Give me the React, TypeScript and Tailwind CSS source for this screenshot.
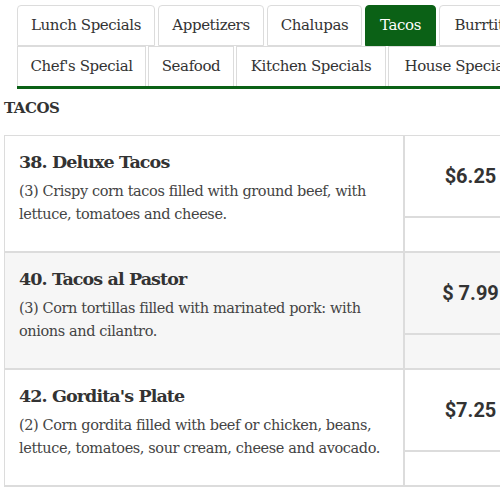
import React from "react";

const row1 = [
  { label: "Lunch Specials", w: "w-[138px]" },
  { label: "Appetizers", w: "w-[106px]" },
  { label: "Chalupas", w: "w-[95px]" },
  { label: "Tacos", w: "w-[71px]", active: true },
  { label: "Burrtitos", w: "w-[96px]" },
];

const row2 = [
  { label: "Chef's Special", w: "w-[129px]" },
  { label: "Seafood", w: "w-[86px]" },
  { label: "Kitchen Specials", w: "w-[150px]" },
  { label: "House Specials", w: "w-[144px]" },
];

const items = [
  {
    title: "38. Deluxe Tacos",
    desc: "(3) Crispy corn tacos filled with ground beef, with lettuce, tomatoes and cheese.",
    price: "$6.25",
  },
  {
    title: "40. Tacos al Pastor",
    desc: "(3) Corn tortillas filled with marinated pork: with onions and cilantro.",
    price: "$ 7.99",
    shaded: true,
  },
  {
    title: "42. Gordita's Plate",
    desc: "(2) Corn gordita filled with beef or chicken, beans, lettuce, tomatoes, sour cream, cheese and avocado.",
    price: "$7.25",
  },
];

const slab = "font-['DejaVu_Serif',serif]";

export default function App() {
  return (
    <div className={`w-[500px] h-[500px] overflow-hidden bg-white ${slab}`}>
      {/* Category tabs */}
      <div className="pl-[17px] pt-[5px] w-[560px]">
        <div className="flex gap-[3px]">
          {row1.map((t) => (
            <div
              key={t.label}
              className={`${t.w} h-[41px] shrink-0 flex items-center justify-center rounded-t-[4px] border text-[15px] tracking-[-0.4px] ${
                t.active
                  ? "bg-[#0b6116] border-[#0b6116] text-white"
                  : "bg-white border-[#dcdcdc] text-[#333]"
              }`}
            >
              {t.label}
            </div>
          ))}
        </div>
        <div className="flex gap-[2px] border-b-[3px] border-[#0b6116]">
          {row2.map((t) => (
            <div
              key={t.label}
              className={`${t.w} h-[40px] shrink-0 flex items-center justify-center border border-b-0 border-[#dcdcdc] bg-white text-[15px] tracking-[-0.4px] text-[#333]`}
            >
              {t.label}
            </div>
          ))}
        </div>
      </div>

      <h2 className="pl-[4px] mt-[9px] text-[15px] font-bold text-[#333] leading-[20px] tracking-[-0.5px]">
        TACOS
      </h2>

      {/* Menu table */}
      <div className="ml-[4px] mt-[17px] w-[533px] border border-[#dcdcdc] border-b-[2px]">
        {items.map((it, i) => (
          <div
            key={it.title}
            className={`flex ${i > 0 ? "border-t-[2px] border-[#dcdcdc]" : ""} ${
              it.shaded ? "bg-[#f6f6f6]" : "bg-white"
            }`}
          >
            <div className="w-[400px] shrink-0 pl-[14px] pr-[16px] pt-[14px] pb-[25px] border-r-[2px] border-[#dcdcdc]">
              <div className="text-[17.5px] font-bold leading-[24px] text-[#333] tracking-[-0.9px]">
                {it.title}
              </div>
              <p className="mt-[6px] text-[14.5px] leading-[23px] text-[#444] tracking-[-0.4px]">
                {it.desc}
              </p>
            </div>
            <div className="flex-1 flex flex-col">
              <div className="h-[80px] flex items-center justify-center font-['Roboto',sans-serif] font-bold text-[20px] text-[#333]">
                {it.price}
              </div>
              <div className="flex-1 border-t-[2px] border-[#dcdcdc]" />
            </div>
          </div>
        ))}
      </div>
    </div>
  );
}
